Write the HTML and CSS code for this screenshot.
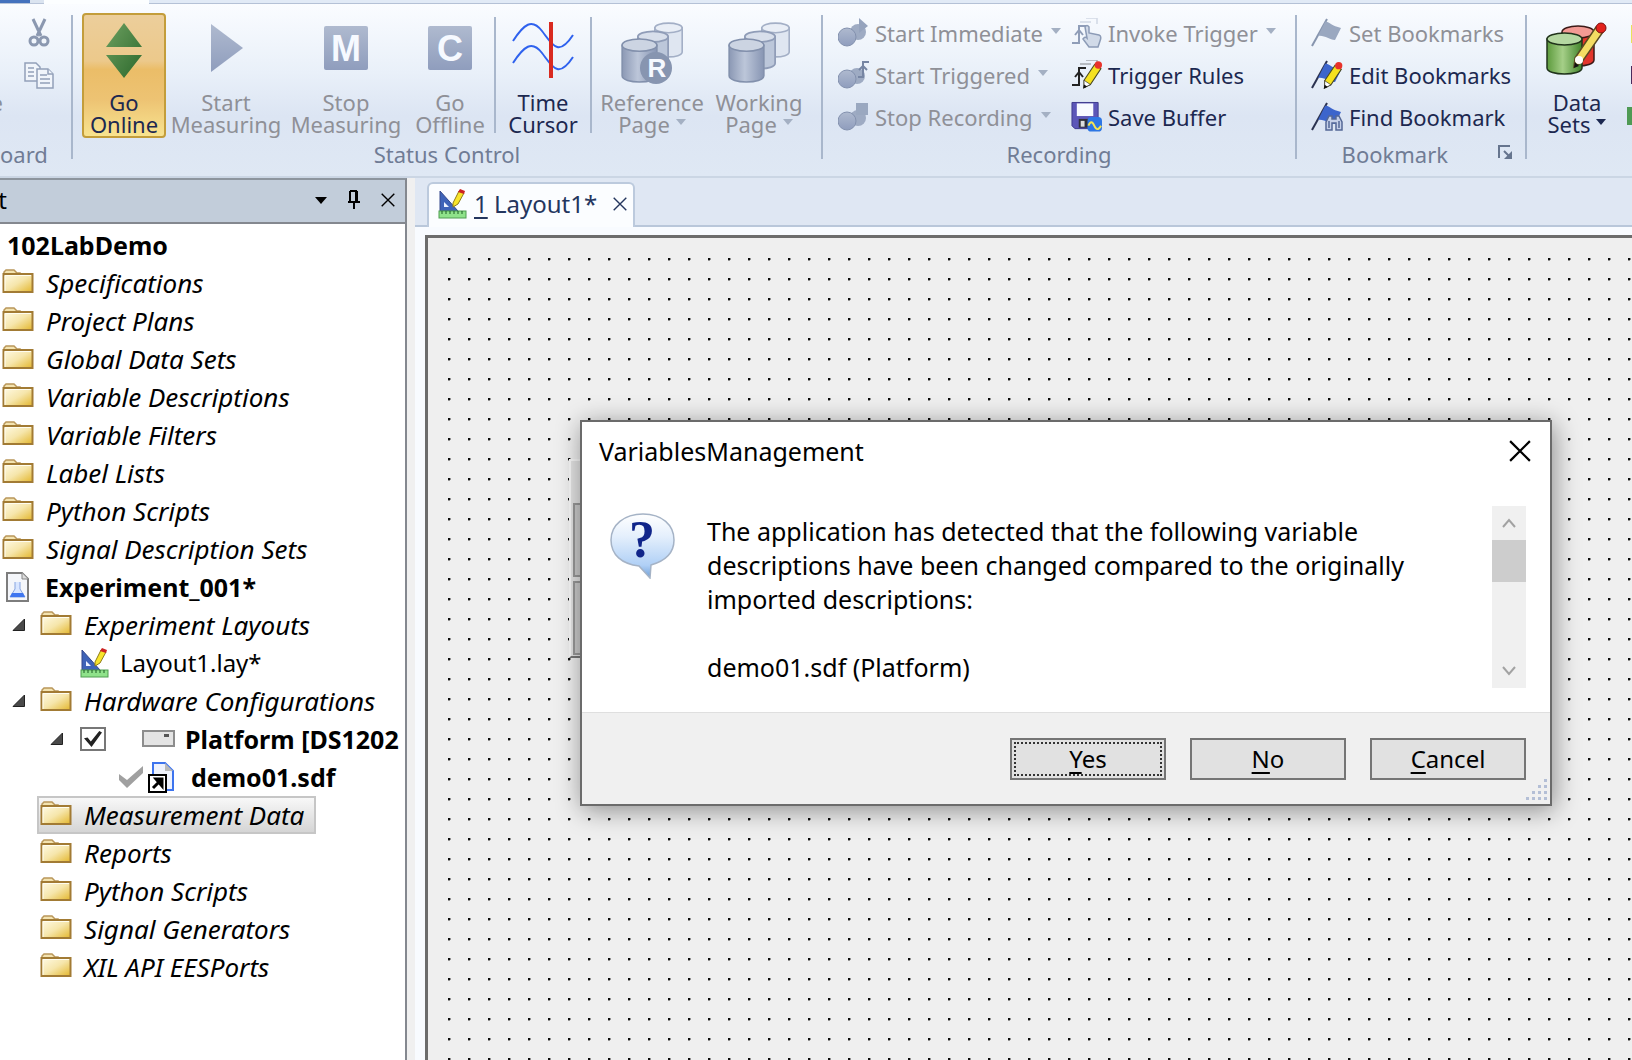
FILE: index.html
```html
<!DOCTYPE html>
<html lang="en">
<head>
<meta charset="utf-8">
<title>102LabDemo</title>
<link rel="stylesheet" href="styles.css">
</head>
<body>
<svg class="defs" aria-hidden="true">
  <defs>
    <linearGradient id="gFolder" x1="0" y1="0" x2="1" y2="1"><stop offset="0" stop-color="#fffbe6"/><stop offset=".5" stop-color="#f6e6ac"/><stop offset="1" stop-color="#e3b62c"/></linearGradient>
    <linearGradient id="gGrey" x1="0" y1="0" x2="0" y2="1"><stop offset="0" stop-color="#afbacf"/><stop offset="1" stop-color="#8f9dbd"/></linearGradient>
    <linearGradient id="gGreen" x1="0" y1="0" x2="1" y2="1"><stop offset="0" stop-color="#6da060"/><stop offset="1" stop-color="#2c682c"/></linearGradient>
    <linearGradient id="gCyl" x1="0" y1="0" x2="1" y2="0"><stop offset="0" stop-color="#8b98b4"/><stop offset=".45" stop-color="#bcc6d9"/><stop offset="1" stop-color="#8795b3"/></linearGradient>
    <linearGradient id="gCylGreen" x1="0" y1="0" x2="1" y2="0"><stop offset="0" stop-color="#5c9a3c"/><stop offset=".45" stop-color="#a5cf88"/><stop offset="1" stop-color="#41842a"/></linearGradient>
    <linearGradient id="gBubble" x1="0" y1="0" x2="0" y2="1"><stop offset="0" stop-color="#ffffff"/><stop offset=".35" stop-color="#e4effc"/><stop offset=".8" stop-color="#b0d0f6"/><stop offset="1" stop-color="#6f9fd8"/></linearGradient>
    <symbol id="folder" viewBox="0 0 32 28">
      <path d="M2 6V3L4 1H12L15 4H18V7H2Z" fill="#f3e3b0" stroke="#b9975a" stroke-width="1.5"/>
      <rect x="1.5" y="5" width="29" height="18" fill="url(#gFolder)" stroke="#a27b34" stroke-width="2"/>
      <path d="M3 22V6.500H29" fill="none" stroke="#fffdf0" stroke-width="1"/>
    </symbol>
    <symbol id="layout" viewBox="0 0 30 30">
      <path d="M2 2V22H20Z" fill="#3e63b8" stroke="#34488c"/>
      <path d="M6 13V18H11Z" fill="#eef3ff"/>
      <rect x="1" y="22" width="27" height="7" fill="#8fe28a" stroke="#4e9e50"/>
      <path d="M4 22v3M8 22v3M12 22v3M16 22v3M20 22v3M24 22v3" stroke="#1d5c25"/>
      <path d="M15 14L21 2L26 4L20 15L15 18Z" fill="#f8e42a" stroke="#8d7b17"/>
      <path d="M20 3L22 0L27 2L26 5Z" fill="#c22"/>
    </symbol>
    <symbol id="rec" viewBox="0 0 30 30">
      <circle cx="9" cy="19" r="9" fill="url(#gGrey)" stroke="#8391ae"/>
    </symbol>
    <symbol id="pencil" viewBox="0 0 18 26">
      <path d="M1 18L11 3L17 7L7 22L1 25Z" fill="#f5e11f" stroke="#4b4a20"/>
      <path d="M1 18L7 22L1 25Z" fill="#fff" stroke="#222" stroke-width=".6"/>
      <path d="M0 26L1 22L4 24Z" fill="#111"/>
      <circle cx="14.500" cy="3.500" r="3.500" fill="#e8322a"/>
    </symbol>
    <symbol id="cyl" viewBox="0 0 36 44">
      <path d="M1 7V37C1 45 35 45 35 37V7Z" fill="url(#gCyl)" stroke="#8290ac" stroke-width="1.500"/>
      <ellipse cx="18" cy="7" rx="17" ry="6" fill="#ccd4e2" stroke="#8290ac" stroke-width="1.500"/>
    </symbol>
    <symbol id="cylLight" viewBox="0 0 36 44">
      <path d="M1 7V37C1 45 35 45 35 37V7Z" fill="#dfe6f1" stroke="#a3afc6" stroke-width="2"/>
      <ellipse cx="18" cy="7" rx="17" ry="6" fill="#e9eef6" stroke="#a3afc6" stroke-width="2"/>
    </symbol>
    <symbol id="cylMid" viewBox="0 0 36 44">
      <path d="M1 7V37C1 45 35 45 35 37V7Z" fill="#bcc7da" stroke="#909db8" stroke-width="2"/>
      <ellipse cx="18" cy="7" rx="17" ry="6" fill="#d8dfeb" stroke="#909db8" stroke-width="2"/>
    </symbol>
    <symbol id="cyls" viewBox="0 0 62 62">
      <use href="#cylLight" x="33" y="0" width="29" height="36"/>
      <use href="#cylMid" x="16" y="8" width="32" height="40"/>
      <use href="#cyl" x="0" y="16" width="37" height="45"/>
    </symbol>
    <symbol id="open" viewBox="0 0 14 14"><path d="M12.500 1V12.500H1Z" fill="#4a4a4a" stroke="#222"/></symbol>
    <symbol id="caret" viewBox="0 0 12 7"><path d="M0 0H12L6 7Z" fill="currentColor"/></symbol>
    <symbol id="flag" viewBox="0 0 32 30">
      <path d="M1 28L16 1" stroke="currentColor" stroke-width="2" fill="none"/>
      <path d="M14 4C18 3 20 8 30 10L24 22C18 22 14 17 7 18Z" fill="var(--cloth)"/>
    </symbol>
    <symbol id="cross" viewBox="0 0 20 20"><path d="M1 1L19 19M19 1L1 19" stroke="currentColor" stroke-width="2" fill="none"/></symbol>
    <symbol id="trig" viewBox="0 0 28 28">
      <path d="M1 25H8V8H15M8 8M4 17L8 12L12 17" fill="none" stroke="currentColor" stroke-width="2"/>
      <path d="M9 4H20M15 0H26V6" fill="none" stroke="currentColor" stroke-opacity=".35" stroke-width="1.500"/>
    </symbol>
  </defs>
</svg>

<div class="app">
  <header class="ribbon">
    <div class="tabstrip"><span class="file-tab"></span><span class="active-tab"></span><span class="rest-tab"></span></div>
    <div class="groups">
      <section class="group clipboard">
        <div class="tools">
          <span class="cut-off">e</span>
          <div class="stack">
            <button class="icon-btn" aria-label="Cut"><svg width="22" height="30" viewBox="0 0 22 30" fill="none" stroke="#8b98b0"><path d="M5 1L13 18M17 1L9 18" stroke-width="3"/><circle cx="6" cy="23" r="4" stroke-width="3"/><circle cx="16" cy="23" r="4" stroke-width="3"/></svg></button>
            <button class="icon-btn" aria-label="Copy"><svg width="30" height="28" viewBox="0 0 30 28" fill="#f1f5fb" stroke="#92a0b9" stroke-width="1.500"><path d="M1 1H12L16 5V19H1Z"/><path d="M4 6H10M4 10H10M4 14H10"/><path d="M13 7H24L29 12V26H13Z"/><path d="M24 7V12H29M16 13H23M16 17H26M16 21H26"/></svg></button>
          </div>
        </div>
        <h2 class="caption">oard</h2>
      </section>

      <section class="group status">
        <div class="tools">
          <button class="big online"><svg width="36" height="56" viewBox="0 0 36 56"><path d="M18 0L36 24H0Z M0 32H36L18 55Z" fill="url(#gGreen)"/></svg><span>Go<br>Online</span></button>
          <button class="big w120" disabled><svg width="34" height="56" viewBox="0 0 34 56"><path d="M2 2L34 26L2 50Z" fill="url(#gGrey)"/></svg><span>Start<br>Measuring</span></button>
          <button class="big w120" disabled><svg width="46" height="56" viewBox="0 0 46 56"><rect x="1" y="4" width="44" height="44" rx="2" fill="url(#gGrey)"/><text x="23" y="39" class="glyph g-m">M</text></svg><span>Stop<br>Measuring</span></button>
          <button class="big w88" disabled><svg width="46" height="56" viewBox="0 0 46 56"><rect x="1" y="4" width="44" height="44" rx="2" fill="url(#gGrey)"/><text x="23" y="39" class="glyph g-m">C</text></svg><span>Go<br>Offline</span></button>
          <i class="sep"></i>
          <button class="big w94"><svg width="62" height="56" viewBox="0 0 62 56" fill="none"><path d="M1 19C12 2 20 -4 30 9S46 36 61 13M1 41C12 24 20 18 30 31S46 58 61 35" stroke="#2f62ee" stroke-width="2"/><path d="M39 0V56" stroke="#d92a20" stroke-width="4"/></svg><span>Time<br>Cursor</span></button>
          <i class="sep"></i>
          <button class="big w120" disabled><svg width="62" height="62" viewBox="0 0 62 62"><use href="#cyls" width="62" height="62"/><circle cx="35" cy="46" r="16" fill="#8795b0"/><text x="36" y="55" class="glyph g-r">R</text></svg><span>Reference<br>Page<svg class="dd" width="10" height="6"><use href="#caret"/></svg></span></button>
          <button class="big w94" disabled><svg width="62" height="62"><use href="#cyls"/></svg><span>Working<br>Page<svg class="dd" width="10" height="6"><use href="#caret"/></svg></span></button>
        </div>
        <h2 class="caption">Status Control</h2>
      </section>

      <section class="group recording">
        <div class="tools">
          <div class="stack rows first">
            <button class="small" disabled><svg width="31" height="30" viewBox="0 0 31 30"><circle cx="20" cy="14" r="8" fill="#9eabc3"/><path d="M21 0L30 8L21 15Z" fill="#95a3bd"/><use href="#rec" width="30" height="30"/></svg><span>Start Immediate</span><svg class="dd" width="10" height="6"><use href="#caret"/></svg></button>
            <button class="small" disabled><svg width="31" height="30" viewBox="0 0 31 30"><circle cx="19" cy="16" r="8" fill="#9eabc3"/><use href="#rec" width="30" height="30"/><path d="M20 17H25V2H31M21 10L25 6L29 10" fill="none" stroke="#7685a3" stroke-width="2"/></svg><span>Start Triggered</span><svg class="dd" width="10" height="6"><use href="#caret"/></svg></button>
            <button class="small" disabled><svg width="31" height="30" viewBox="0 0 31 30"><circle cx="20" cy="16" r="8" fill="#9eabc3"/><rect x="18" y="1" width="12" height="12" fill="#9aa8c0"/><use href="#rec" width="30" height="30"/></svg><span>Stop Recording</span><svg class="dd" width="10" height="6"><use href="#caret"/></svg></button>
          </div>
          <div class="stack rows">
            <button class="small" disabled><svg class="tint" width="31" height="30" viewBox="0 0 31 30"><use href="#trig" width="28" height="28"/><path d="M14 9Q16 6 18 9V15L28 17Q31 18 29 23L27 29H18L12 21Q14 18 16 20Z" fill="#d1dae8" stroke="#8c9bb6" stroke-width="1.500"/></svg><span>Invoke Trigger</span><svg class="dd wide" width="10" height="6"><use href="#caret"/></svg></button>
            <button class="small"><svg class="black" width="31" height="30" viewBox="0 0 31 30"><use href="#trig" width="28" height="28"/><use href="#pencil" x="12" y="1" width="19" height="28"/></svg><span>Trigger Rules</span></button>
            <button class="small"><svg width="31" height="32" viewBox="0 0 32 32"><path d="M1 1H28V28H4L1 25Z" fill="#5c56b8" stroke="#3e3a8c"/><rect x="6" y="2" width="17" height="13" fill="#f8faff"/><rect x="8" y="18" width="14" height="9" fill="#30303a"/><rect x="10" y="20" width="4" height="6" fill="#ddd"/><rect x="17" y="16" width="15" height="15" rx="4" fill="#2d76e4"/><path d="M18 25Q21 18 24 25T31 25" fill="none" stroke="#f6e552" stroke-width="2"/></svg><span>Save Buffer</span></button>
          </div>
        </div>
        <h2 class="caption">Recording</h2>
      </section>

      <section class="group bookmark">
        <div class="tools">
          <div class="stack rows">
            <button class="small" disabled><svg class="flag-off" width="32" height="30"><use href="#flag"/></svg><span>Set Bookmarks</span></button>
            <button class="small"><svg class="flag-on" width="32" height="30" viewBox="0 0 32 30"><use href="#flag" width="32" height="30"/><use href="#pencil" x="12" y="2" width="20" height="27"/></svg><span>Edit Bookmarks</span></button>
            <button class="small"><svg class="flag-on" width="32" height="30" viewBox="0 0 32 30"><use href="#flag" width="32" height="30"/><path d="M15 28V20L18 14H21V17H25V14H28L31 20V28H25V21H21V28Z" fill="#c5d0e8" stroke="#546896" stroke-width="1.500"/><path d="M18 19V26M28 19V26" stroke="#546896" stroke-width="1.500"/></svg><span>Find Bookmark</span></button>
          </div>
        </div>
        <div class="foot"><h2 class="caption">Bookmark</h2><button class="icon-btn" aria-label="Bookmark options"><svg width="15" height="15" viewBox="0 0 15 15" fill="none" stroke="#66758e" stroke-width="2"><path d="M1 13V1H12M6 6L12 12"/><path d="M14 6V14H6Z" fill="#66758e" stroke="none"/></svg></button></div>
      </section>

      <section class="group data">
        <div class="tools">
          <button class="big w100"><svg width="62" height="58" viewBox="0 0 62 58"><path d="M16 11V38C16 46 48 46 48 38V11Z" fill="#e2352b" stroke="#3c1a17" stroke-width="1.500"/><ellipse cx="32" cy="10" rx="16" ry="6" fill="#f39a94" stroke="#3c1a17" stroke-width="1.500"/><path d="M1 17V46C1 54 36 54 36 46V17Z" fill="url(#gCylGreen)" stroke="#20331b" stroke-width="1.500"/><ellipse cx="18.500" cy="17" rx="17.500" ry="6" fill="#b5d8a2" stroke="#20331b" stroke-width="1.500"/><path d="M29 36L50 5L57 10L36 40L28 45Z" fill="#f4dc63" stroke="#5a4a22" stroke-width="1.500"/><circle cx="33" cy="38" r="4" fill="#fff"/><path d="M28 46L29 40L33 44Z" fill="#111"/><circle cx="55" cy="6" r="5" fill="#e3221c" stroke="#711"/></svg><span>Data<br>Sets<svg class="dd" width="10" height="6"><use href="#caret"/></svg></span></button>
          <div class="edge"><i class="e1"></i><i class="e2"></i><i class="e3"></i></div>
        </div>
      </section>
    </div>
  </header>

  <main class="body">
    <aside class="pane">
      <div class="pane-head">
        <h2>t</h2>
        <button class="icon-btn" aria-label="Window position"><svg width="12" height="7"><use href="#caret"/></svg></button>
        <button class="icon-btn" aria-label="Auto hide"><svg width="14" height="20" viewBox="0 0 14 20" fill="none" stroke="#000" stroke-width="2"><path d="M3 1V12M1 12H13M3 1H10M7 12V19"/><path d="M9.500 1V12" stroke-width="3"/></svg></button>
        <button class="icon-btn" aria-label="Close"><svg width="14" height="14"><use href="#cross"/></svg></button>
      </div>
      <ul class="tree">
        <li class="root strong"><span>102LabDemo</span></li>
        <li class="l1"><svg class="fold"><use href="#folder"/></svg><span>Specifications</span></li>
        <li class="l1"><svg class="fold"><use href="#folder"/></svg><span>Project Plans</span></li>
        <li class="l1"><svg class="fold"><use href="#folder"/></svg><span>Global Data Sets</span></li>
        <li class="l1"><svg class="fold"><use href="#folder"/></svg><span>Variable Descriptions</span></li>
        <li class="l1"><svg class="fold"><use href="#folder"/></svg><span>Variable Filters</span></li>
        <li class="l1"><svg class="fold"><use href="#folder"/></svg><span>Label Lists</span></li>
        <li class="l1"><svg class="fold"><use href="#folder"/></svg><span>Python Scripts</span></li>
        <li class="l1"><svg class="fold"><use href="#folder"/></svg><span>Signal Description Sets</span></li>
        <li class="exp strong"><svg width="24" height="31" viewBox="0 0 24 31"><path d="M1 1H16L22 7V29H1Z" fill="#f4f6fa" stroke="#7d7d7d" stroke-width="2"/><path d="M16 1V7H22" fill="#ddd" stroke="#888"/><path d="M9 10V17L4 25H19L14 17V10" fill="#d9e6ff" stroke="#88a5e0"/><path d="M6 21H17L19 25H4Z" fill="#3f76f0"/></svg><span>Experiment_001*</span></li>
        <li class="l2 has-open"><svg class="tri"><use href="#open"/></svg><svg class="fold"><use href="#folder"/></svg><span>Experiment Layouts</span></li>
        <li class="lay"><svg width="30" height="30"><use href="#layout"/></svg><span>Layout1.lay*</span></li>
        <li class="l2 has-open"><svg class="tri"><use href="#open"/></svg><svg class="fold"><use href="#folder"/></svg><span>Hardware Configurations</span></li>
        <li class="plat strong"><svg class="tri"><use href="#open"/></svg><input type="checkbox" id="plat" checked><svg width="33" height="18" viewBox="0 0 33 18"><rect x="1" y="1" width="31" height="15" fill="#e4e4e4" stroke="#8d8d8d" stroke-width="2"/><rect x="22" y="4" width="5" height="3" fill="#555"/></svg><label for="plat">Platform [DS1202</label></li>
        <li class="sdf strong"><svg width="27" height="24" viewBox="0 0 27 24"><path d="M1 9L9 15L25 1V8L9 23L1 15Z" fill="#a0a0a0"/></svg><svg width="28" height="31" viewBox="0 0 28 31"><path d="M5 1H17L25 9V28H5Z" fill="#eef2fc" stroke="#3d74ee" stroke-width="2"/><path d="M17 1V9H25Z" fill="#b9b9b9"/><rect x="1" y="13" width="17" height="17" fill="#fff" stroke="#000" stroke-width="2"/><path d="M5 26L11 20M8 17H14V24Z" fill="#000" stroke="#000" stroke-width="3"/></svg><span>demo01.sdf</span></li>
        <li class="l2 selected"><svg class="fold"><use href="#folder"/></svg><span>Measurement Data</span></li>
        <li class="l2"><svg class="fold"><use href="#folder"/></svg><span>Reports</span></li>
        <li class="l2"><svg class="fold"><use href="#folder"/></svg><span>Python Scripts</span></li>
        <li class="l2"><svg class="fold"><use href="#folder"/></svg><span>Signal Generators</span></li>
        <li class="l2"><svg class="fold"><use href="#folder"/></svg><span>XIL API EESPorts</span></li>
      </ul>
    </aside>

    <section class="work">
      <nav class="doc-tabs">
        <div class="doc-tab"><svg width="30" height="30"><use href="#layout"/></svg><a href="#layout1"><u>1</u> Layout1*</a><button class="icon-btn" aria-label="Close layout"><svg width="14" height="14"><use href="#cross"/></svg></button></div>
      </nav>
      <div class="canvas" id="layout1">
        <div class="instrument"><i></i><i></i></div>
        <div class="dialog" role="dialog" aria-labelledby="dlg-title">
          <div class="dlg-head"><h1 id="dlg-title">VariablesManagement</h1><button class="icon-btn" aria-label="Close dialog"><svg width="22" height="22"><use href="#cross"/></svg></button></div>
          <div class="dlg-body">
            <svg class="ask" width="66" height="66" viewBox="0 0 66 66"><path d="M33 1C52 1 64 12 64 27C64 40 55 48 41 52L40 65L29 53C12 51 1 42 1 27C1 12 14 1 33 1Z" fill="url(#gBubble)" stroke="#a5b3c6" stroke-width="1.500"/><text x="32" y="44" class="glyph g-q">?</text></svg>
            <div class="message">
              <p>The application has detected that the following variable descriptions have been changed compared to the originally imported descriptions:</p>
              <p>demo01.sdf (Platform)</p>
            </div>
            <div class="scroll">
              <button class="icon-btn" aria-label="Scroll up"><svg width="14" height="10" viewBox="0 0 14 10"><path d="M1 9L7 2L13 9" fill="none" stroke="#a2a2a2" stroke-width="2"/></svg></button>
              <i class="thumb"></i>
              <button class="icon-btn" aria-label="Scroll down"><svg width="14" height="10" viewBox="0 0 14 10"><path d="M1 1L7 8L13 1" fill="none" stroke="#a2a2a2" stroke-width="2"/></svg></button>
            </div>
          </div>
          <div class="dlg-foot">
            <button class="push focus"><u>Y</u>es</button>
            <button class="push"><u>N</u>o</button>
            <button class="push"><u>C</u>ancel</button>
            <svg class="grip" width="22" height="22" viewBox="0 0 22 22" fill="#b4bfd6"><path d="M18 0h3v3h-3zM12 6h3v3h-3zM18 6h3v3h-3zM6 12h3v3h-3zM12 12h3v3h-3zM18 12h3v3h-3zM0 18h3v3h-3zM6 18h3v3h-3zM12 18h3v3h-3zM18 18h3v3h-3z"/></svg>
          </div>
        </div>
      </div>
    </section>
  </main>
</div>
</body>
</html>
```
FILE: styles.css
```css
* { box-sizing: border-box; }
body {
  margin: 0;
  font-family: "Noto Sans", "Open Sans", sans-serif;
  font-size: 24px;
  color: #000;
  background: #fff;
}
h1, h2, p, ul { margin: 0; padding: 0; font-weight: 400; }
ul { list-style: none; }
i { display: block; }
button { font: inherit; color: inherit; background: none; border: 0; padding: 0; }
svg { display: block; flex: none; }
.defs { position: absolute; width: 0; height: 0; }
.icon-btn { display: flex; align-items: center; justify-content: center; }
.glyph { font-family: "Liberation Sans", sans-serif; font-weight: 700; fill: #f6f9ff; text-anchor: middle; }
.g-m { font-size: 36px; }
.g-r { font-size: 26px; }
.g-q { font-family: "Liberation Serif", serif; font-size: 52px; fill: #10258a; }

.app { display: flex; flex-direction: column; height: 100vh; overflow: hidden; background: #dfe7f3; }

/* Ribbon */
.ribbon { flex: none; }
.tabstrip { display: flex; height: 4px; background: #fcfeff; }
.file-tab { width: 44px; background: linear-gradient(90deg, #4472bd 30px, #dbe4f0 30px); border-bottom: 1px solid #b9c5d9; }
.active-tab { width: 105px; }
.rest-tab { flex: 1; background: #e1eaf6; border-bottom: 1px solid #b4c1d6; }
.groups {
  display: flex;
  height: 174px;
  overflow: hidden;
  background: linear-gradient(#fafcff 0, #e9f0f9 40%, #dce5f3 65%, #dfe8f4 100%);
  border-bottom: 2px solid #cbd6e4;
  font-size: 22px;
  color: #1c2850;
}
.group {
  flex: none;
  display: flex;
  flex-direction: column;
  height: 144px;
  margin-top: 11px;
  border-right: 2px solid #a9b7cc;
}
.tools { flex: none; display: flex; align-items: flex-start; height: 116px; }
.caption { flex: none; font-size: 22px; line-height: 22px; height: 22px; margin-top: 12px; text-align: center; color: #707c95; }
.stack { display: flex; flex-direction: column; }
.clipboard { width: 73px; }
.clipboard .stack { margin-left: 24px; gap: 14px; padding-top: 3px; }
.cut-off { width: 3px; height: 110px; overflow: hidden; direction: rtl; line-height: 30px; padding-top: 72px; margin-right: -3px; color: #8c8f98; }
.clipboard .caption { text-align: left; }

.status { width: 750px; }
.status .tools { padding-left: 9px; }
.big {
  flex: none;
  display: flex;
  flex-direction: column;
  align-items: center;
  justify-content: flex-end;
  height: 125px;
  margin-top: -2px;
  padding-bottom: 3px;
  line-height: 22px;
}
.big > svg { margin-bottom: auto; margin-top: 9px; }
.big svg.dd { display: inline-block; vertical-align: 8px; margin-left: 6px; }
.online { width: 84px; border: 2px solid #c39d3b; border-radius: 4px; background: linear-gradient(#ecce9b 0, #ecc98b 38%, #ebbd68 45%, #edc373 70%, #f8e38f 100%); padding-bottom: 1px; }
.online > svg { margin-top: 8px; }
.w88 { width: 88px; }
.w94 { width: 94px; }
.w100 { width: 100px; }
.w120 { width: 120px; }
button:disabled { color: #8f9097; }
button:disabled .dd { color: #a4b0c3; }
.sep { flex: none; width: 2px; height: 116px; margin-top: 2px; background: #a9b7cc; }
.recording { width: 474px; }
.recording .tools { padding-left: 15px; }
.rows { gap: 12px; padding-top: 4px; }
.first { width: 233px; }
.small { display: flex; align-items: center; gap: 6px; height: 30px; line-height: 28px; padding-bottom: 2px; white-space: nowrap; }
.small .dd { margin: 0 0 4px 2px; }
.tint { color: #8f9db8; }
.black { color: #222; }
.bookmark { width: 230px; }
.bookmark .tools { padding-left: 14px; }
.foot { flex: none; display: flex; align-items: flex-start; justify-content: flex-end; gap: 50px; padding-right: 12px; }
.foot .icon-btn { margin-top: 14px; }
.flag-off { color: #8795ae; --cloth: #9aa8c0; }
.flag-on { color: #2c3350; --cloth: #3c65cc; }
.data { border-right: 0; flex: 1; }
.edge { flex: none; display: flex; flex-direction: column; gap: 23px; padding-top: 10px; }
.edge i { width: 6px; height: 18px; }
.edge .e1, .edge .e2 { margin-left: 4px; }
.e1 { background: #e8e35a; }
.e2 { background: #4b2a5c; }
.e3 { background: #4f9a54; }

/* Project pane */
.body { flex: 1; display: flex; min-height: 0; }
.pane { flex: none; width: 407px; background: #fff; border-top: 2px solid #8d959e; border-right: 2px solid #84888f; overflow: hidden; }
.pane-head { display: flex; align-items: center; height: 44px; padding: 0 10px 2px 0; background: #c2cdda; border-bottom: 2px solid #84888f; }
.pane-head h2 { margin-right: auto; font-size: 24px; line-height: 40px; width: 7px; display: flex; justify-content: flex-end; }
.pane-head .icon-btn { margin-left: 20px; }
.tree { padding-top: 2px; }
.tree li { display: flex; align-items: center; height: 38px; gap: 12px; font-size: 26px; font-style: italic; white-space: nowrap; line-height: 34px; }
.tree .strong { font-size: 25px; font-weight: 700; font-style: normal; }
.fold { width: 32px; height: 28px; }
.tri { width: 14px; height: 14px; }
.tree .root { padding-left: 7px; }
.tree .l1 { padding-left: 2px; }
.tree .l2 { padding-left: 40px; }
.tree .has-open { padding-left: 12px; }
.has-open .tri { margin-right: 2px; }
.tree .exp { padding-left: 6px; gap: 15px; }
.tree .lay { padding-left: 80px; gap: 10px; font-size: 24px; font-style: normal; }
.tree .plat { padding-left: 50px; gap: 10px; }
.plat input { flex: none; appearance: none; width: 26px; height: 24px; margin: 0 26px 0 6px; border: 2px solid #777; background: #fff; }
.plat input::before { content: ""; display: block; width: 18px; height: 16px; margin: 2px; background: #222; clip-path: polygon(0 45%, 20% 40%, 38% 65%, 85% 0, 100% 10%, 42% 100%); }
.tree .sdf { padding-left: 118px; gap: 3px; }
.sdf span { margin-left: 12px; }
.tree .selected { width: 279px; margin-left: 37px; padding-left: 1px; border: 2px solid #c6c6c6; background: linear-gradient(#f8f8f8, #d5d5d5); }

/* Document area */
.work { flex: 1; min-width: 0; display: flex; flex-direction: column; border-left: 8px solid #f0f0f0; background: #f8fbff; }
.doc-tabs { display: flex; align-items: flex-end; height: 49px; padding-left: 12px; background: #dfe7f3; border-bottom: 2px solid #b9c7da; }
.doc-tab { display: flex; align-items: center; height: 45px; width: 208px; margin-bottom: -2px; padding: 0 6px 4px 9px; border: 2px solid #bccadd; border-bottom: 0; border-radius: 6px 6px 0 0; background: #fbfdff; color: #24365e; }
.doc-tab a { color: inherit; text-decoration: none; margin: 0 auto 0 6px; white-space: pre; }
u { text-decoration-thickness: 2px; text-underline-offset: 4px; }
.canvas {
  flex: 1;
  position: relative;
  overflow: hidden;
  margin: 8px 0 0 10px;
  padding: 20px 0 0 20px;
  border: 3px solid #6c6c6c;
  border-right: 0;
  border-bottom: 0;
  background:
    radial-gradient(circle at 1px 1px, #111 1px, transparent 2px) 0 0 / 20px 20px content-box content-box,
    linear-gradient(#efefef, #efefef);
}
.instrument { position: absolute; left: 141px; top: 221px; width: 60px; height: 199px; padding: 42px 0 0 2px; background: #e4e4e4; border: 2px solid #f8f8f8; border-bottom-color: #777; }
.instrument i { height: 74px; margin-bottom: 4px; background: #ccc; border: 2px solid #999; }

/* Message box */
.dialog { position: absolute; left: 152px; top: 182px; width: 972px; border: 2px solid #6b6b6b; background: #fff; box-shadow: 2px 4px 24px rgba(0, 0, 0, .42); font-size: 25px; }
.dlg-head { display: flex; justify-content: space-between; align-items: center; height: 58px; padding: 0 19px 0 17px; }
.dlg-head h1 { font-size: 25px; line-height: 34px; }
.dlg-body { display: flex; height: 232px; padding: 26px 24px 24px 28px; }
.ask { margin-top: 7px; }
.message { flex: 1; padding: 8px 60px 0 31px; line-height: 34px; }
.message p + p { margin-top: 34px; }
.scroll { display: flex; flex-direction: column; width: 34px; height: 182px; background: #f0f0f0; }
.scroll .icon-btn { height: 34px; }
.thumb { height: 42px; margin-bottom: auto; background: #cdcdcd; }
.dlg-foot { position: relative; display: flex; justify-content: flex-end; gap: 24px; height: 92px; padding: 25px 24px 0 0; border-top: 1px solid #dfdfdf; background: #f0f0f0; }
.push { width: 156px; height: 42px; border: 2px solid #757575; background: #e1e1e1; line-height: 34px; font-size: 24px; }
.focus { outline: 2px dotted #333; outline-offset: -6px; }
.grip { position: absolute; right: 2px; bottom: 3px; }
```
